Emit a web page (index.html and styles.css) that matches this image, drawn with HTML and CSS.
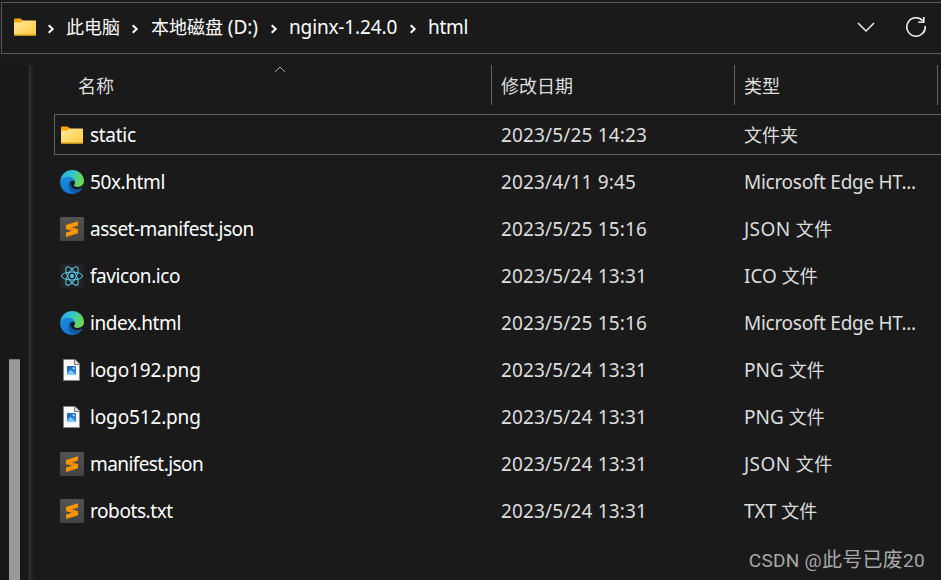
FILE: index.html
```html
<!DOCTYPE html>
<html lang="zh-CN">
<head>
<meta charset="utf-8">
<title>html</title>
<link rel="stylesheet" href="styles.css">
</head>
<body>
<svg class="defs" width="0" height="0" aria-hidden="true">
  <defs>
    <linearGradient id="gFolder" x1="0" y1="0" x2="1" y2="1"><stop offset="0" stop-color="#ffe9a0"/><stop offset="1" stop-color="#ffc93a"/></linearGradient>
    <linearGradient id="gEdgeTop" x1="0" y1="0" x2="1" y2=".35"><stop offset="0" stop-color="#2aa6e0"/><stop offset=".5" stop-color="#35c4d0"/><stop offset="1" stop-color="#65da50"/></linearGradient>
    <linearGradient id="gEdgeLeft" x1="0" y1="0" x2=".3" y2="1"><stop offset="0" stop-color="#1b8fdc"/><stop offset="1" stop-color="#0f78d4"/></linearGradient>
    <linearGradient id="gPic" x1="0" y1="0" x2="1" y2="1"><stop offset="0" stop-color="#1d62b8"/><stop offset="1" stop-color="#2f8ff0"/></linearGradient>
    <linearGradient id="gSub" x1="0" y1="0" x2="0" y2="1"><stop offset="0" stop-color="#535353"/><stop offset="1" stop-color="#444"/></linearGradient>
  </defs>
  <symbol id="folder" viewBox="0 0 24 24">
    <path d="M1 4.500Q1 3.500 2 3.500H7.500L10 5.500V9H1Z" fill="#f5a800"/>
    <path d="M1 7.500H7.500L9.500 5.500H22.300Q23 5.500 23 6.200V19.800Q23 20.500 22.300 20.500H1.700Q1 20.500 1 19.800Z" fill="url(#gFolder)"/>
    <path d="M1 19.300H23V19.800Q23 20.500 22.300 20.500H1.700Q1 20.500 1 19.800Z" fill="#e9a91c"/>
  </symbol>
  <symbol id="edge" viewBox="0 0 24 24">
    <path d="M.2 11C1 4.500 6 0 12 0C19 0 24 5 24 10.800C24 14.800 21 17 17.600 17C14.800 17 13.800 15.800 14 15C14.400 14.300 15 13.600 15 12.200C15 9.500 12 7.200 8.400 7.200C4 7.200 .9 9.500 .2 11Z" fill="url(#gEdgeTop)"/>
    <path d="M.1 12C.3 9 3.500 6.800 8 6.800C12.200 6.800 15 9.400 15 12.200C13.500 9.800 10.800 10.600 9.600 12.500C7.500 17 10.500 22 14.800 23.700C6 25 0 19 .1 12Z" fill="url(#gEdgeLeft)"/>
    <path d="M11 11.200C9.800 13.800 11.200 18.600 16 19.200C18.500 19.400 20.500 18.500 21.700 17.800C22.300 17.500 22.700 18 22.300 18.500C20.500 21.500 17.800 23.300 14.800 23.700C10 22.500 7 17.500 8.800 13.600C9.400 12.300 10.200 11.600 11 11.200Z" fill="#125aa8"/>
  </symbol>
  <symbol id="sublime" viewBox="0 0 24 24">
    <rect width="24" height="24" rx="1.500" fill="url(#gSub)"/>
    <path d="M6 8L18 4.200V8.600L11.800 10.500L18 12.200V16.200L6 20V15.600L12.200 13.700L6 12Z" fill="#ff9800"/>
    <path d="M6 12L11.800 10.500L18 12.200L17.600 13.200L12.200 13.700Z" fill="#f58e00"/>
  </symbol>
  <symbol id="react" viewBox="0 0 24 24">
    <rect width="24" height="24" rx="3" fill="#212223"/>
    <g fill="none" stroke="#61d3f2" stroke-width="1">
      <ellipse cx="12" cy="12" rx="10.500" ry="4"/>
      <ellipse cx="12" cy="12" rx="10.500" ry="4" transform="rotate(60 12 12)"/>
      <ellipse cx="12" cy="12" rx="10.500" ry="4" transform="rotate(120 12 12)"/>
    </g>
    <circle cx="12" cy="12" r="1.900" fill="#61d3f2"/>
  </symbol>
  <symbol id="image" viewBox="0 0 24 24">
    <path d="M3.500 1.500H15L19.500 6V22.500H3.500Z" fill="#fafafa" stroke="#858585"/>
    <path d="M14.500 1.500V6.500H19.500" fill="#ddd" stroke="#777"/>
    <rect x="7" y="8" width="9" height="9" rx="1" fill="url(#gPic)"/>
    <path d="M7 15.500L10.700 11.800L16 17H8Q7 17 7 16Z" fill="#7cc8f8"/>
    <circle cx="13.700" cy="10.300" r="1" fill="#e8f6ff"/>
  </symbol>
  <symbol id="crumb" viewBox="0 0 8 12"><path d="M1.700 2.300L5.700 6L1.700 9.700" fill="none" stroke="#fff" stroke-width="2"/></symbol>
</svg>

<header class="address">
  <svg class="icon"><use href="#folder"/></svg>
  <svg class="sep"><use href="#crumb"/></svg>
  <span class="crumb c1">此电脑</span>
  <svg class="sep"><use href="#crumb"/></svg>
  <span class="crumb c2">本地磁盘 <span class="latin">(D:)</span></span>
  <svg class="sep"><use href="#crumb"/></svg>
  <span class="crumb c3 latin">nginx-1.24.0</span>
  <svg class="sep"><use href="#crumb"/></svg>
  <span class="crumb c4 latin">html</span>
  <svg class="drop" viewBox="0 0 18 12"><path d="M1 2L9 10L17 2" fill="none" stroke="#eee" stroke-width="1.500"/></svg>
  <svg class="reload" viewBox="0 0 22 22"><path d="M17.800 4.700A9.200 9.200 0 1 0 20.200 10" fill="none" stroke="#f2f2f2" stroke-width="1.600"/><path d="M18.800 1V6.200H13.300" fill="none" stroke="#f2f2f2" stroke-width="1.600"/></svg>
</header>

<main class="body">
  <aside class="nav"><div class="thumb"></div></aside>
  <section class="files">
    <div class="head">
      <div class="th name">名称<svg class="sort" viewBox="0 0 12 7"><path d="M.7 6.200L6 1L11.300 6.200" fill="none" stroke="#aaa"/></svg></div>
      <div class="th date">修改日期</div>
      <div class="th type">类型</div>
    </div>
    <div class="row selected"><div class="name"><svg class="icon"><use href="#folder"/></svg><span class="n1">static</span></div><div class="date">2023/5/25 14:23</div><div class="type"><span class="cjk">文件夹</span></div></div>
    <div class="row"><div class="name"><svg class="icon"><use href="#edge"/></svg><span class="n2">50x.html</span></div><div class="date">2023/4/11 9:45</div><div class="type edge">Microsoft Edge HT...</div></div>
    <div class="row"><div class="name"><svg class="icon"><use href="#sublime"/></svg><span class="n3">asset-manifest.json</span></div><div class="date">2023/5/25 15:16</div><div class="type json">JSON <span class="cjk">文件</span></div></div>
    <div class="row"><div class="name"><svg class="icon"><use href="#react"/></svg><span class="n4">favicon.ico</span></div><div class="date">2023/5/24 13:31</div><div class="type">ICO <span class="cjk">文件</span></div></div>
    <div class="row"><div class="name"><svg class="icon"><use href="#edge"/></svg><span class="n5">index.html</span></div><div class="date">2023/5/25 15:16</div><div class="type edge">Microsoft Edge HT...</div></div>
    <div class="row"><div class="name"><svg class="icon"><use href="#image"/></svg><span class="n6">logo192.png</span></div><div class="date">2023/5/24 13:31</div><div class="type">PNG <span class="cjk">文件</span></div></div>
    <div class="row"><div class="name"><svg class="icon"><use href="#image"/></svg><span class="n6">logo512.png</span></div><div class="date">2023/5/24 13:31</div><div class="type">PNG <span class="cjk">文件</span></div></div>
    <div class="row"><div class="name"><svg class="icon"><use href="#sublime"/></svg><span class="n8">manifest.json</span></div><div class="date">2023/5/24 13:31</div><div class="type json">JSON <span class="cjk">文件</span></div></div>
    <div class="row"><div class="name"><svg class="icon"><use href="#sublime"/></svg><span class="n9">robots.txt</span></div><div class="date">2023/5/24 13:31</div><div class="type">TXT <span class="cjk">文件</span></div></div>
  </section>
</main>
<div class="watermark">CSDN @<span class="user">此号已废</span>20</div>
</body>
</html>
```
FILE: styles.css
```css
* { box-sizing: border-box; }
body {
  margin: 0;
  width: 941px;
  height: 580px;
  overflow: hidden;
  background: #1a1a1a;
  color: #fff;
  font: 18px/24px "Noto Sans", "Noto Sans CJK SC", sans-serif;
}
.defs { position: absolute; }
.icon { width: 24px; height: 24px; flex: none; }
.address {
  display: flex;
  align-items: center;
  height: 52px;
  margin: 2px 0 0 1px;
  padding: 0 0 2px 11px;
  border: 1px solid #575757;
  border-right: 0;
  white-space: nowrap;
}
.address .icon { margin-right: 10px; }
.sep { width: 8px; height: 12px; flex: none; margin-top: 3px; }
.crumb { flex: none; }
.c1 { width: 65px; margin-left: 11px; }
.c2 { width: 119px; margin-left: 12px; }
.c3 { width: 120px; margin-left: 11px; letter-spacing: -.15px; }
.c4 { margin-left: 11px; letter-spacing: -.3px; }
.latin { font-size: 19px; }
.drop { width: 18px; height: 12px; margin-left: auto; }
.reload { width: 22px; height: 22px; margin: 0 14px 0 30px; }
.body { display: flex; height: 526px; padding-top: 11px; }
.nav {
  width: 33px;
  flex: none;
  padding: 294px 0 0 9px;
  background: #181818;
  border-right: 2px solid #232323;
  box-shadow: inset -2px 0 #2d2d2d, inset -3px 0 #202020;
}
.thumb { width: 11px; height: 221px; background: #989898; border-top: 1px solid #777; }
.files { flex: 1; padding-left: 21px; }
.head, .row { display: grid; grid-template-columns: 437px 243px 1fr; }
.head { grid-template-columns: 438px 243px 1fr; height: 40px; margin-bottom: 9px; color: #dedede; }
.th { display: flex; align-items: center; border-right: 1px solid #636363; padding-top: 1px; }
.head .name { padding-left: 24px; }
.head .date, .head .type { padding-left: 9px; }
.head .type { margin-right: 3px; }
.sort { width: 12px; height: 7px; align-self: flex-start; margin: 0 0 0 160px; }
.row {
  height: 41px;
  margin-bottom: 6px;
  align-items: center;
  border: 1px solid transparent;
  border-right: 0;
  font-size: 19px;
  white-space: nowrap;
}
.row.selected { border-color: #636363; }
.row .name { display: flex; align-items: center; gap: 6px; padding-left: 5px; }
.row .date, .row .type { padding-left: 9px; color: #dedede; }
.row .date { letter-spacing: .15px; }
.row .edge { letter-spacing: -.28px; }
.row .json { letter-spacing: .4px; }
.n1 { letter-spacing: -.3px; }
.n2 { letter-spacing: -.4px; }
.n3 { letter-spacing: -.49px; }
.n4 { letter-spacing: -.42px; }
.n5 { letter-spacing: -.42px; }
.n6 { letter-spacing: -.15px; }
.n8 { letter-spacing: -.58px; }
.n9 { letter-spacing: -.42px; }
.cjk { font-size: 18px; }
.watermark {
  position: absolute;
  right: 16px;
  bottom: 6px;
  font: 19px/26px Roboto, "Noto Sans CJK SC", sans-serif;
  letter-spacing: .28px;
  color: #a8a8a8;
}
.user { font-size: 20px; }
```
